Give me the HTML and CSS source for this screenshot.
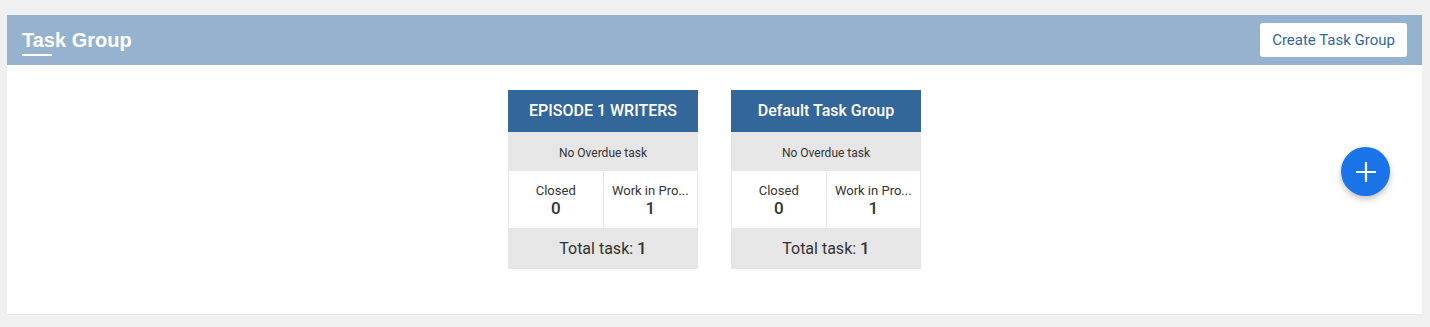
FILE: index.html
```html
<!DOCTYPE html>
<html>
<head>
<meta charset="utf-8">
<link rel="stylesheet" href="styles.css">
</head>
<body>
<div class="page">
  <section class="panel">
    <header class="panel-header">
      <h1 class="title">Task Group</h1>
      <button class="create-btn">Create Task Group</button>
    </header>
    <div class="panel-body">
      <div class="cards">
        <div class="card">
          <div class="card-head">EPISODE 1 WRITERS</div>
          <div class="card-overdue">No Overdue task</div>
          <div class="card-stats">
            <div class="stat"><span class="stat-label">Closed</span><span class="stat-value">0</span></div>
            <div class="stat"><span class="stat-label">Work in Pro...</span><span class="stat-value">1</span></div>
          </div>
          <div class="card-total"><span>Total task: <b>1</b></span></div>
        </div>
        <div class="card">
          <div class="card-head">Default Task Group</div>
          <div class="card-overdue">No Overdue task</div>
          <div class="card-stats">
            <div class="stat"><span class="stat-label">Closed</span><span class="stat-value">0</span></div>
            <div class="stat"><span class="stat-label">Work in Pro...</span><span class="stat-value">1</span></div>
          </div>
          <div class="card-total"><span>Total task: <b>1</b></span></div>
        </div>
      </div>
      <button class="fab" aria-label="Add">
        <svg width="24" height="24" viewBox="0 0 24 24"><path d="M12 2v20M2 12h20" stroke="#fff" stroke-width="2.2" fill="none"/></svg>
      </button>
    </div>
  </section>
</div>
</body>
</html>
```
FILE: styles.css
```css
* { box-sizing: border-box; }
html, body { margin: 0; padding: 0; }
body {
  background: #f0f0f0;
  font-family: Roboto, "Liberation Sans", Arial, sans-serif;
  color: #333;
}
.page {
  padding: 15px 8px 12px 7px;
}
.panel {
  background: #fff;
  height: 300px;
  display: flex;
  flex-direction: column;
  border-bottom: 1px solid #e8e8e8;
}
.panel-header {
  height: 50px;
  background: #95b3cf;
  display: flex;
  align-items: center;
  justify-content: space-between;
  padding: 0 15px;
}
.title {
  margin: 0;
  position: relative;
  font-family: "Liberation Sans", Arial, sans-serif;
  font-weight: bold;
  font-size: 20px;
  color: #fff;
  line-height: 24px;
}
.title::after {
  content: "";
  position: absolute;
  left: 0;
  top: 26px;
  width: 30px;
  height: 2px;
  background: #fff;
}
.create-btn {
  height: 34px;
  padding: 0 12px;
  border: none;
  border-radius: 3px;
  background: #fff;
  color: #336699;
  font-family: Roboto, "Liberation Sans", sans-serif;
  font-size: 15px;
  cursor: pointer;
}
.panel-body {
  flex: 1;
  position: relative;
  padding-top: 25px;
}
.cards {
  display: flex;
  justify-content: center;
  gap: 33px;
}
.card {
  width: 190px;
  background: #e6e6e6;
  display: flex;
  flex-direction: column;
}
.card-head {
  height: 42px;
  background: #336699;
  color: #fff;
  font-weight: 500;
  font-size: 16px;
  display: flex;
  align-items: center;
  justify-content: center;
  padding-bottom: 2px;
}
.card-overdue {
  height: 39px;
  display: flex;
  align-items: center;
  justify-content: center;
  font-size: 12px;
  color: #333;
  padding-top: 2px;
}
.card-stats {
  height: 57px;
  display: grid;
  grid-template-columns: 1fr 1fr;
  gap: 1px;
  padding: 0 1px;
}
.stat {
  background: #fff;
  display: flex;
  flex-direction: column;
  align-items: center;
  justify-content: center;
  padding-top: 2px;
}
.stat-label {
  font-size: 13px;
  line-height: 15px;
  color: #333;
}
.stat-value {
  font-size: 17px;
  font-weight: 500;
  line-height: 20px;
  color: #333;
}
.card-total {
  height: 41px;
  display: flex;
  align-items: center;
  justify-content: center;
  font-size: 16px;
  color: #333;
  padding-bottom: 2px;
}
.card-total b {
  font-weight: 500;
  font-size: 17px;
}
.fab {
  position: absolute;
  right: 32px;
  top: 82px;
  width: 49px;
  height: 49px;
  border-radius: 50%;
  border: none;
  background: #1a73e8;
  box-shadow: 0 3px 6px rgba(0,0,0,0.25);
  display: flex;
  align-items: center;
  justify-content: center;
  padding: 0;
}
```
